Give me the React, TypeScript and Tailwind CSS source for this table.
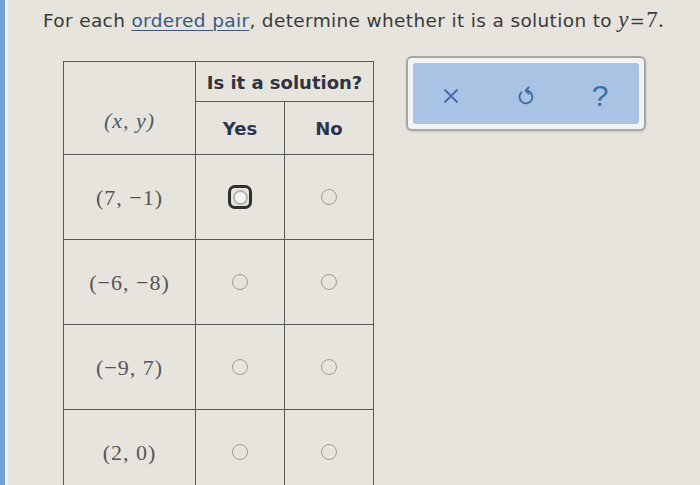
import React from "react";

const rows = ["(7, −1)", "(−6, −8)", "(−9, 7)", "(2, 0)"];

function Radio({ selected }: { selected?: boolean }) {
    if (selected) {
        return (
            <span className="inline-flex items-center justify-center w-[24px] h-[24px] rounded-[7px] border-[3px] border-[#2f2f2f]">
                <span className="w-[15px] h-[15px] rounded-full border-2 border-[#b3b3b3] bg-[#f4f4f2]" />
            </span>
        );
    }
    return <span className="inline-block w-[16px] h-[16px] rounded-full border-[1.5px] border-[#9c9c9c]" />;
}

function UndoIcon() {
    return (
        <svg width="22" height="26" viewBox="0 0 24 28" fill="none" stroke="#3d6da6" strokeWidth="2" strokeLinecap="round" strokeLinejoin="round">
            <path d="M12 8 A7 7 0 1 1 7 10" />
            <path d="M15 4.5 L11.5 8 L15 11.5" />
        </svg>
    );
}

export default function App() {
    return (
        <div className="w-[700px] h-[485px] overflow-hidden flex bg-[#e6e4dd]">
            <div className="w-[5px] shrink-0 bg-[#74a2d7]" />
            <div className="w-[3px] shrink-0 bg-[#efeeea]" />
            <div className="flex-1 pl-[35px] pt-[7px]">
                <p className="text-[18.5px] text-[#3a3a3a] tracking-[0.35px] font-['DejaVu_Sans',sans-serif] leading-[26px] whitespace-nowrap">
                    For each{" "}
                    <span className="underline underline-offset-[3px] decoration-[1px] text-[#3b587f]">ordered pair</span>
                    , determine whether it is a solution to{" "}
                    <span className="font-['Liberation_Serif',serif] text-[23px]">
                        <i>y</i>
                        <span className="font-['DejaVu_Sans',sans-serif] text-[18px] px-[1px]">=</span>7.
                    </span>
                </p>

                <div className="flex items-start mt-[27px] ml-[20px]">
                    <table className="border-collapse border-[1.5px] border-[#5a5a5a] text-center">
                        <colgroup>
                            <col className="w-[132px]" />
                            <col className="w-[89px]" />
                            <col className="w-[89px]" />
                        </colgroup>
                        <thead>
                            <tr className="h-[40px]">
                                <th rowSpan={2} className="border-[1.5px] border-[#5a5a5a] align-bottom pb-[17px] font-normal italic text-[22px] tracking-[1px] text-[#4d5a68] font-['Liberation_Serif',serif]">
                                    (x, y)
                                </th>
                                <th colSpan={2} className="border-[1.5px] border-[#5a5a5a] font-bold text-[18px] text-[#2f3440] font-['DejaVu_Sans',sans-serif] pt-[2px] whitespace-nowrap">
                                    Is it a solution?
                                </th>
                            </tr>
                            <tr className="h-[53px]">
                                <th className="border-[1.5px] border-[#5a5a5a] font-bold text-[18px] text-[#2c3550] font-['DejaVu_Sans',sans-serif]">
                                    Yes
                                </th>
                                <th className="border-[1.5px] border-[#5a5a5a] font-bold text-[18px] text-[#2c3550] font-['DejaVu_Sans',sans-serif]">
                                    No
                                </th>
                            </tr>
                        </thead>
                        <tbody>
                            {rows.map((r, i) => (
                                <tr key={r} className="h-[85px]">
                                    <td className="border-[1.5px] border-[#5a5a5a] text-[22px] tracking-[1px] text-[#555555] font-['Liberation_Serif',serif]">
                                        {r}
                                    </td>
                                    <td className="border-[1.5px] border-[#5a5a5a]">
                                        <div className="flex justify-center items-center">
                                            <Radio selected={i === 0} />
                                        </div>
                                    </td>
                                    <td className="border-[1.5px] border-[#5a5a5a]">
                                        <div className="flex justify-center items-center">
                                            <Radio />
                                        </div>
                                    </td>
                                </tr>
                            ))}
                        </tbody>
                    </table>

                    <div className="ml-[32px] -mt-[5px] w-[240px] h-[75px] rounded-[6px] border-2 border-[#a4a6a8] bg-[#f3f3f1] p-[5px] shadow-sm">
                        <div className="h-full rounded-[3px] bg-[#a8c3e4] flex items-center pt-[4px]">
                            <div className="w-[76px] flex justify-center">
                                <svg width="16" height="16" viewBox="0 0 16 16" stroke="#3d6da6" strokeWidth="1.8" strokeLinecap="round">
                                    <path d="M2 2 L14 14 M14 2 L2 14" />
                                </svg>
                            </div>
                            <div className="w-[74px] flex justify-center">
                                <UndoIcon />
                            </div>
                            <div className="w-[74px] flex justify-center text-[30px] leading-none text-[#3d6da6] font-['Liberation_Sans',sans-serif]">
                                ?
                            </div>
                        </div>
                    </div>
                </div>
            </div>
        </div>
    );
}
